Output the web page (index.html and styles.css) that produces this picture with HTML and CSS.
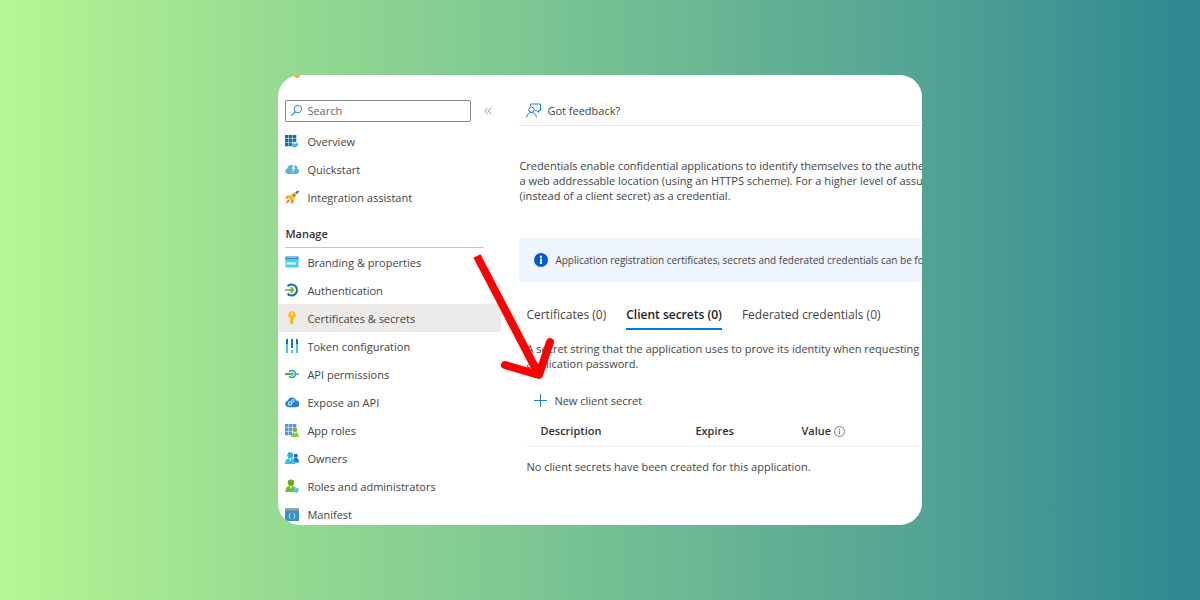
FILE: index.html
```html
<!DOCTYPE html>
<html lang="en">
<head>
    <meta charset="UTF-8">
    <meta name="viewport" content="width=device-width, initial-scale=1.0">
    <title>Certificates &amp; secrets</title>
    <link rel="stylesheet" href="styles.css">
</head>
<body>
    <div class="card">
        <svg class="peek" viewBox="0 0 8 4" aria-hidden="true"><path d="M0 0h8L5 3H3z" fill="#f7a51c"/></svg>

        <nav class="sidebar">
            <div class="search-row">
                <label class="search">
                    <svg viewBox="0 0 14 14" aria-label="Search"><circle cx="8.5" cy="5.5" r="4" fill="none" stroke="#1b80d8"/><path d="M5.6 8.4L1.5 12.5" stroke="#1b80d8" stroke-width="1.2"/></svg>
                    <input type="search" placeholder="Search">
                </label>
                <button class="collapse" type="button" aria-label="Collapse menu">
                    <svg viewBox="0 0 8 8"><path d="M4 .5L.7 4 4 7.5M7.5 .5L4.2 4l3.3 3.5" fill="none" stroke="#777" stroke-width=".8"/></svg>
                </button>
            </div>

            <ul class="menu">
                <li><a href="#">
                    <svg viewBox="0 0 14 14"><path d="M0 1h3.500v3.400H0zM4 1h3.400v3.400H4zM7.900 1h3.400v3.400H7.900zM0 4.900h3.500v3.400H0zM4 4.900h3.400v3.400H4zM7.900 4.900h3.400v3.400H7.900zM0 8.800h3.500v3.400H0zM4 8.800h3.400v3.400H4z" fill="#0f6cbd"/><path d="M6.500 9l3 1.200L13 8.800v3l-3.300 2-3.200-2z" fill="#56b0e0"/><path d="M6.500 9l3 1.200L13 8.800 9.800 7.500z" fill="#b5e0f5"/></svg>
                    Overview</a></li>
                <li><a href="#">
                    <svg viewBox="0 0 14 14"><path d="M2.800 12a2.800 2.800 0 0 1-.4-5.500A3.700 3.700 0 0 1 6.500 3a2 2 0 0 1 1.500.8L9.500 3A3.200 3.200 0 0 1 12.300 6.500 2.900 2.900 0 0 1 11.500 12z" fill="#59b4d9"/><path d="M8.800 3L6.500 7h1.700L7 11 10.500 6.200H8.900L10 3z" fill="#fff"/></svg>
                    Quickstart</a></li>
                <li><a href="#">
                    <svg viewBox="0 0 14 14"><path d="M5 5L1.500 6 0 9l4-1zM9 9l-.5 3.500L6 14V10z" fill="#f78d1e"/><path d="M3 9l2 2-4.500 3z" fill="#ef6f0e"/><path d="M4 8.500C5.500 4.500 9 2 12.500 1.500 12.300 5 9.500 8.800 5.800 10.400z" fill="#ffb718"/><path d="M10.500 2C11.500 1.200 12.700.8 14 .5c-.2 1.300-.7 2.600-1.400 3.600z" fill="#1976d2"/><circle cx="9" cy="5.300" r="1" fill="#1976d2"/></svg>
                    Integration assistant</a></li>
            </ul>

            <h2 class="menu-title">Manage</h2>

            <ul class="menu">
                <li><a href="#">
                    <svg viewBox="0 0 14 14"><path d="M.5 1.500h13V5H.5z" fill="#1b75bb"/><path d="M.5 4h13v8a.6.6 0 0 1-.6.6H1.100a.6.6 0 0 1-.6-.6z" fill="#40cfee"/><path d="M1.500 2.700h11" stroke="#c8eaf8" stroke-width=".8"/><path d="M2 7l.7 2.500.8-2 .8 2L5 7l.7 2.500.8-2 .8 2L8 7l.7 2.500.8-2 .8 2L11 7" fill="none" stroke="#fff" stroke-width=".8"/></svg>
                    Branding &amp; properties</a></li>
                <li><a href="#">
                    <svg viewBox="0 0 14 14"><path d="M2.500 3.200A5.500 5.500 0 1 1 2.500 10.800" fill="none" stroke="#0f6cbd" stroke-width="2"/><path d="M0 7h8M5.500 4.200L8.500 7l-3 2.800" fill="none" stroke="#6bb31c" stroke-width="1.500"/></svg>
                    Authentication</a></li>
                <li class="selected"><a href="#">
                    <svg viewBox="0 0 14 14"><path d="M7 .3a3.900 3.900 0 0 1 1.800 7.300v1l-.8.8.8.9-.8.9.5.7L7 14l-1.700-1.700V7.600A3.900 3.900 0 0 1 7 .3z" fill="#ffbd16"/><circle cx="7" cy="2.700" r="1.100" fill="#fff0b8"/><path d="M6.300 8v4" stroke="#e69800" stroke-width=".7"/></svg>
                    Certificates &amp; secrets</a></li>
                <li><a href="#">
                    <svg viewBox="0 0 14 14"><path d="M1 0h2v5H1zM6 0h2v9H6zM11 0h2v5h-2z" fill="#1573c4"/><path d="M1 5h2v9H1zM6 11h2v3H6zM11 5h2v9h-2z" fill="#42c8e8"/></svg>
                    Token configuration</a></li>
                <li><a href="#">
                    <svg viewBox="0 0 14 14"><path d="M10 7h4" stroke="#32a9df" stroke-width="1.600"/><path d="M4 4.800A3.600 3.600 0 1 1 4 9.200" fill="none" stroke="#1ba2d4" stroke-width="1.500"/><path d="M0 7h7" stroke="#63a51c" stroke-width="1.800"/><circle cx="7.200" cy="7" r="1.700" fill="#7bbd25"/></svg>
                    API permissions</a></li>
                <li><a href="#">
                    <svg viewBox="0 0 14 14"><path d="M3.500 12.200A3.400 3.400 0 0 1 2.900 5.500 4.300 4.300 0 0 1 11 5.400 3.400 3.400 0 0 1 11 12.200z" fill="#267edb"/><circle cx="5" cy="8.500" r="1.600" fill="none" stroke="#cce6ff" stroke-width="1.200"/><circle cx="8" cy="5.800" r="1.300" fill="none" stroke="#cce6ff"/></svg>
                    Expose an API</a></li>
                <li><a href="#">
                    <svg viewBox="0 0 14 14"><path d="M0 1h3.500v3.400H0zM4 1h3.400v3.400H4zM7.900 1h3.400v3.400H7.900zM0 4.900h3.500v3.400H0zM4 4.900h3.400v3.400H4zM0 8.800h3.500v3.400H0zM4 8.800h3v3.400H4z" fill="#5c91e8"/><circle cx="10" cy="6.800" r="2.200" fill="#70b52c"/><path d="M6.200 14c0-3 1.500-5 3.800-5s3.800 2 3.800 5z" fill="#83ce2c"/><path d="M9 9.200h2L10 11z" fill="#fff"/></svg>
                    App roles</a></li>
                <li><a href="#">
                    <svg viewBox="0 0 14 14"><circle cx="10.800" cy="4.800" r="2" fill="#1266b8"/><path d="M8 11.500c0-3.300 1-4.800 2.800-4.800s3.200 1.500 3.200 4.800z" fill="#1976d2"/><circle cx="5.200" cy="4.200" r="2.900" fill="#27b5df"/><path d="M0 13C0 9 2.200 6.800 5.200 6.800S10.300 9 10.300 13z" fill="#33c1e8"/><path d="M4 7.200h2.400L5.200 10z" fill="#fff"/></svg>
                    Owners</a></li>
                <li><a href="#">
                    <svg viewBox="0 0 14 14"><circle cx="6" cy="3.800" r="3.200" fill="#69a82a"/><path d="M.3 13c0-4 2-6.200 5.700-6.200s5.500 2.200 5.500 6.200z" fill="#79bd2b"/><path d="M4.700 7.200h2.600L6 10z" fill="#e6f5d4"/><path d="M11 8.500l2.700 1v2c0 1-1 2-2.700 2.500-1.700-.5-2.700-1.500-2.700-2.500v-2z" fill="#52c9e8"/></svg>
                    Roles and administrators</a></li>
                <li><a href="#">
                    <svg viewBox="0 0 14 14"><path d="M0 1h14v13H0z" fill="#398fc4"/><path d="M0 1h14v2.500H0z" fill="#96a3ac"/><path d="M5.500 6Q4.500 6 4.700 8L4 9l.7 1q-.2 2 .8 2M8.500 6q1 0 .8 2l.7 1-.7 1q.2 2-.8 2" fill="none" stroke="#d9f1ff" stroke-width=".8"/></svg>
                    Manifest</a></li>
            </ul>
        </nav>

        <main class="content">
            <div class="toolbar">
                <button class="command" type="button">
                    <svg viewBox="0 0 15 15" fill="none" stroke="#1b80d8"><path d="M4.500 3V1h10v6.500h-2v2l-2-2H9"/><circle cx="5.500" cy="6.700" r="2.700"/><path d="M.6 14.500c.3-3 2.200-5 4.900-5s4.600 2 4.900 5"/></svg>
                    Got feedback?
                </button>
            </div>

            <p class="intro">Credentials enable confidential applications to identify themselves to the auther<br>
            a web addressable location (using an HTTPS scheme). For a higher level of assur<br>
            (instead of a client secret) as a credential.</p>

            <div class="info">
                <svg viewBox="0 0 14 14"><circle cx="7" cy="7" r="7" fill="#015cda"/><path d="M6 5.800h2V11H6zM6 2.800h2v1.900H6z" fill="#fff"/></svg>
                Application registration certificates, secrets and federated credentials can be fo
            </div>

            <div class="panel">
                <div class="tabs" role="tablist">
                    <button class="tab" type="button" role="tab">Certificates (0)</button>
                    <button class="tab active" type="button" role="tab" aria-selected="true">Client secrets (0)</button>
                    <button class="tab" type="button" role="tab">Federated credentials (0)</button>
                </div>

                <p class="description">A secret string that the application uses to prove its identity when requesting a<br>
                application password.</p>

                <button class="command add" type="button">
                    <svg viewBox="0 0 13 13"><path d="M6.500 0v13M0 6.500h13" stroke="#1b80d8"/></svg>
                    New client secret
                </button>

                <table class="secrets">
                    <thead>
                        <tr>
                            <th>Description</th>
                            <th>Expires</th>
                            <th>Value <svg viewBox="0 0 11 11"><circle cx="5.500" cy="5.500" r="5" fill="none" stroke="#666" stroke-width=".8"/><path d="M5.500 4.700v3.500M5.500 2.700v1" stroke="#666" stroke-width=".9"/></svg></th>
                        </tr>
                    </thead>
                    <tbody>
                        <tr>
                            <td colspan="3">No client secrets have been created for this application.</td>
                        </tr>
                    </tbody>
                </table>
            </div>
        </main>

        <svg class="arrow" viewBox="0 0 76 126" aria-hidden="true">
            <path d="M4 2L66 121" stroke-linecap="butt"/>
            <path d="M32 111L66 121L77 88"/>
        </svg>
    </div>
</body>
</html>
```

FILE: styles.css
```css
body {
    font-family: "Segoe UI", "Open Sans", sans-serif;
    font-size: 11px;
    line-height: 15px;
    color: #444;
    margin: 0;
    min-height: 100vh;
    display: grid;
    place-items: center;
    background: linear-gradient(90deg, #b6f693 0%, #98dc91 22%, #7fc993 42%, #51a294 78%, #318a91 98%);
}
button, input {
    font: inherit;
    color: inherit;
    background: none;
    border: none;
    padding: 0;
}
button {
    cursor: pointer;
}
.card {
    position: relative;
    display: grid;
    grid-template-columns: 223px 1fr;
    width: 53.6%;
    height: 75vh;
    background: white;
    border-radius: 22px;
    overflow: hidden;
}
.peek {
    position: absolute;
    top: 0;
    left: 15px;
    width: 8px;
}
.sidebar {
    padding-top: 25px;
}
.search-row {
    display: flex;
    align-items: center;
    gap: 13px;
    padding-left: 7px;
    margin-bottom: 5px;
}
.search {
    display: flex;
    align-items: center;
    gap: 4px;
    box-sizing: border-box;
    width: 186px;
    height: 22px;
    padding: 0 4px 1px;
    border: 1px solid #8a8886;
    border-radius: 2px;
}
.search svg {
    width: 13px;
    flex: none;
}
.search input {
    min-width: 0;
    flex: 1;
    outline: none;
}
.search input::placeholder {
    color: #666;
}
.collapse svg {
    display: block;
    width: 8px;
}
.menu {
    list-style: none;
    margin: 0;
    padding: 0;
}
.menu a {
    display: flex;
    align-items: center;
    gap: 8px;
    height: 28px;
    padding-left: 7px;
    color: inherit;
    text-decoration: none;
}
.menu svg {
    width: 14px;
    height: 14px;
}
.menu .selected {
    background: #edebe9;
}
.menu-title {
    margin: 0 17px 0 7px;
    padding: 15px 0 6px;
    border-bottom: 1px solid #c8c6c4;
    font-size: 11px;
    font-weight: 600;
    color: #333;
}
.content {
    min-width: 0;
    padding-left: 18px;
    overflow: hidden;
    white-space: nowrap;
}
.toolbar {
    padding: 28px 0 7px 7px;
    border-bottom: 1px solid #e8e8e8;
}
.command {
    display: flex;
    align-items: center;
    gap: 6px;
}
.command svg {
    width: 15px;
}
.intro {
    margin: 32px 0 35px;
}
.info {
    display: flex;
    align-items: center;
    gap: 7px;
    height: 44px;
    padding-left: 15px;
    border-radius: 2px;
    background: #eff5ff;
    font-size: 10px;
}
.info svg {
    width: 14px;
    flex: none;
}
.panel {
    padding: 22px 0 0 7px;
}
.tabs {
    display: flex;
    gap: 20px;
}
.tab {
    padding: 3px 0 6px;
    border-bottom: 2px solid transparent;
    font-size: 12px;
}
.tab.active {
    font-weight: 600;
    color: #222;
    border-color: #0078d4;
}
.description {
    margin: 11px 0 22px;
}
.add {
    padding-left: 8px;
    gap: 7px;
}
.add svg {
    width: 13px;
}
.secrets {
    width: 100%;
    margin-top: 8px;
    border-collapse: collapse;
}
.secrets th {
    padding: 7px 0 8px 14px;
    border-bottom: 1px solid #f0f0f0;
    text-align: left;
    font-weight: 600;
    color: #333;
}
.secrets th:nth-child(1) {
    width: 141px;
}
.secrets th:nth-child(2) {
    width: 92px;
}
.secrets th svg {
    width: 11px;
    vertical-align: -2px;
}
.secrets td {
    padding: 12px 0;
}
.arrow {
    position: absolute;
    top: 179px;
    left: 195px;
    width: 76px;
    height: 126px;
    overflow: visible;
    fill: none;
    stroke: #f00;
    stroke-width: 8;
    stroke-linecap: round;
    stroke-linejoin: round;
    pointer-events: none;
}
```
